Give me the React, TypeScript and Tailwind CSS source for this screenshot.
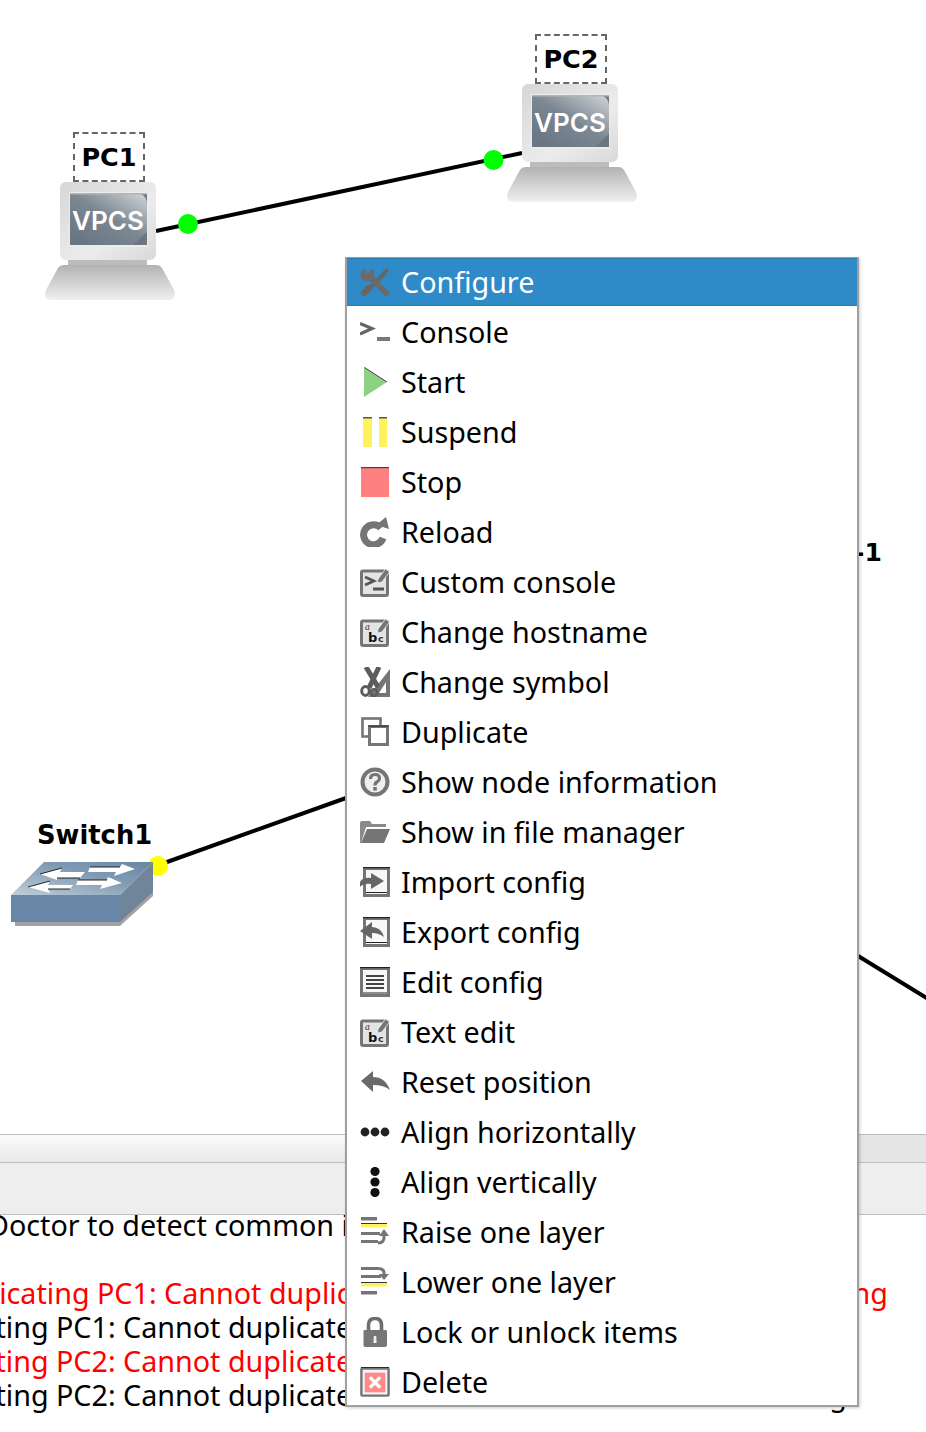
import React from 'react'

const G = '#757575'

// Small box shared by the "custom console" and "hostname" icons
const PencilBox = ({ children }: { children: React.ReactNode }) => (
  <svg width="30" height="30" viewBox="0 0 30 30">
    <rect x="1.5" y="4" width="26" height="24.5" rx="1.5" fill="#e4e4e4" stroke={G} strokeWidth="3" />
    {children}
    <path d="M18 12 L25.5 2 L29.5 5 L22 15 L17.5 16 Z" fill={G} stroke="#f2f2f2" strokeWidth="0.8" />
  </svg>
)

const HostnameIcon = () => (
  <PencilBox>
    <text x="5" y="13" fontSize="9.5" fontStyle="italic" fontFamily="Liberation Serif, serif" fill="#333">a</text>
    <text x="8" y="25" fontSize="13" fontWeight="700" fontFamily="DejaVu Sans, sans-serif" fill="#111">b</text>
    <text x="18" y="25" fontSize="9.5" fontWeight="700" fontFamily="DejaVu Sans, sans-serif" fill="#333">c</text>
  </PencilBox>
)

const icons: Record<string, React.ReactNode> = {
  configure: (
    <svg width="30" height="30" viewBox="0 0 30 30">
      <path d="M24 7 L9 22" stroke="#666" strokeWidth="4.5" />
      <path d="M9 21 L4 26" stroke="#666" strokeWidth="6.5" strokeLinecap="round" />
      <path d="M22 9 L23 4 L27 1 L29 3 L26 7 Z" fill="#666" />
      <path d="M9 9 L26 26" stroke="#6a6a6a" strokeWidth="6" strokeLinecap="round" />
      <circle cx="7.5" cy="7.5" r="7" fill="#6a6a6a" />
      <polygon points="7,7 3,-1 12,-1 11,3" fill="#2e8bc8" />
    </svg>
  ),
  console: (
    <svg width="30" height="30" viewBox="0 0 30 30">
      <path d="M0 6.5 L12 11.5 L0 17" fill="none" stroke="#666" strokeWidth="3.2" />
      <rect x="17" y="20" width="13" height="4" fill="#777" />
    </svg>
  ),
  start: (
    <svg width="30" height="30" viewBox="0 0 30 30">
      <polygon points="4,0 27,15 4,30" fill="#8dd283" />
      <path d="M4.5 0.5 L27 15" stroke="#444" strokeWidth="1" fill="none" />
    </svg>
  ),
  suspend: (
    <svg width="30" height="30" viewBox="0 0 30 30">
      <rect x="3" y="0" width="9" height="30" fill="#fff25a" />
      <rect x="19" y="0" width="8" height="30" fill="#fff25a" />
      <rect x="3" y="0" width="9" height="1.5" fill="#555" />
      <rect x="19" y="0" width="8" height="1.5" fill="#555" />
    </svg>
  ),
  stop: (
    <svg width="30" height="30" viewBox="0 0 30 30">
      <rect x="1" y="0" width="28" height="30" fill="#ff8080" />
      <rect x="1" y="0" width="28" height="1.2" fill="#444" />
    </svg>
  ),
  reload: (
    <svg width="30" height="30" viewBox="0 0 30 30">
      <path d="M21 11 A 10 10 0 1 0 23 21" fill="none" stroke={G} strokeWidth="7" />
      <polygon points="16,8 29,12 26,0" fill={G} />
    </svg>
  ),
  custom: (
    <PencilBox>
      <path d="M5 10 L14 14 L5 18" fill="none" stroke="#555" strokeWidth="2.6" />
      <rect x="13" y="20.5" width="11" height="3" fill="#555" />
    </PencilBox>
  ),
  hostname: <HostnameIcon />,
  symbol: (
    <svg width="30" height="30" viewBox="0 0 30 30">
      <path d="M30 2 V30 H8 Z M26 15 L19 26 H26 Z" fill={G} fillRule="evenodd" />
      <path d="M6 0 L18 20" stroke="#5c5c5c" strokeWidth="5" />
      <path d="M19 0 L9 21" stroke="#5c5c5c" strokeWidth="5" />
      <ellipse cx="5.5" cy="24" rx="3.8" ry="4.4" fill="none" stroke="#5c5c5c" strokeWidth="3" />
      <circle cx="14" cy="25.5" r="3.2" fill="none" stroke="#5c5c5c" strokeWidth="2.6" />
    </svg>
  ),
  duplicate: (
    <svg width="30" height="30" viewBox="0 0 30 30">
      <rect x="2.5" y="1.5" width="18" height="18" fill="#fff" stroke={G} strokeWidth="2.6" />
      <rect x="9.5" y="9.5" width="18" height="18" fill="#fff" stroke={G} strokeWidth="3" />
      <rect x="8.5" y="8.5" width="20" height="1.2" fill="#333" />
    </svg>
  ),
  info: (
    <svg width="30" height="30" viewBox="0 0 30 30">
      <circle cx="15" cy="15" r="12.5" fill="#efefef" stroke={G} strokeWidth="4" />
      <path d="M10.5 12 Q10.5 7.5 15 7.5 Q19.5 7.5 19.5 11.5 Q19.5 13.5 17 15 Q15 16 15 18.5" fill="none" stroke={G} strokeWidth="3.2" />
      <rect x="13.2" y="20" width="3.6" height="3.6" fill={G} />
    </svg>
  ),
  folder: (
    <svg width="30" height="30" viewBox="0 0 30 30">
      <path d="M0 26 V6 Q0 4 2 4 H10 L12 7 H26 V10 H6 L1 26 Z" fill="#8a8a8a" />
      <path d="M7 12 H30 L24 26 H1 Z" fill="#757575" />
    </svg>
  ),
  importCfg: (
    <svg width="30" height="30" viewBox="0 0 30 30">
      <rect x="4.5" y="1.5" width="24" height="27" fill="#f8f8f8" stroke={G} strokeWidth="3" />
      <rect x="3" y="0" width="27" height="1.2" fill="#222" />
      <rect x="6" y="25" width="21" height="1" fill="#222" />
      <path d="M0 15 Q3 10 11 11 V6 L24 14 L11 22 V17 Q4 16 0 20 Z" fill="#666" />
    </svg>
  ),
  exportCfg: (
    <svg width="30" height="30" viewBox="0 0 30 30">
      <rect x="4.5" y="1.5" width="24" height="27" fill="#f8f8f8" stroke={G} strokeWidth="3" />
      <rect x="3" y="0" width="27" height="1.2" fill="#222" />
      <rect x="6" y="25" width="21" height="1" fill="#222" />
      <path d="M0 14 L12 5 V10 Q21 10 24 20 Q19 16 12 16 V22 Z" fill="#666" />
    </svg>
  ),
  edit: (
    <svg width="30" height="30" viewBox="0 0 30 30">
      <rect x="1.5" y="1.5" width="27" height="27" fill="#f8f8f8" stroke={G} strokeWidth="3" />
      <rect x="0" y="0" width="30" height="1.2" fill="#222" />
      <rect x="3" y="25.5" width="24" height="1" fill="#222" />
      <path d="M6 9 H24 M6 13 H24 M6 17 H24 M6 21 H24" stroke="#444" strokeWidth="1.8" />
    </svg>
  ),
  reset: (
    <svg width="30" height="30" viewBox="0 0 30 30">
      <path d="M1 14 L13 4 V10 Q25 10 30 23 Q24 18 13 18 V25 Z" fill="#6a6a6a" />
    </svg>
  ),
  alignH: (
    <svg width="30" height="30" viewBox="0 0 30 30">
      <circle cx="5" cy="15" r="4.4" fill="#222" />
      <circle cx="15" cy="15" r="4.4" fill="#222" />
      <circle cx="25" cy="15" r="4.4" fill="#222" />
    </svg>
  ),
  alignV: (
    <svg width="30" height="30" viewBox="0 0 30 30">
      <circle cx="15" cy="4.5" r="4.6" fill="#111" />
      <circle cx="15" cy="15" r="4.6" fill="#111" />
      <circle cx="15" cy="25.5" r="4.6" fill="#111" />
    </svg>
  ),
  raise: (
    <svg width="30" height="30" viewBox="0 0 30 30">
      <rect x="1" y="0" width="16" height="3.5" fill={G} />
      <rect x="1" y="7" width="26" height="3.5" fill="#fff25a" />
      <rect x="1" y="6" width="26" height="1" fill="#333" />
      <rect x="1" y="15" width="19" height="3" fill={G} />
      <rect x="1" y="23" width="17" height="3" fill={G} />
      <path d="M18 26 Q25 26 24 18" fill="none" stroke={G} strokeWidth="3" />
      <polygon points="19,19 24,12 29,19" fill={G} />
    </svg>
  ),
  lower: (
    <svg width="30" height="30" viewBox="0 0 30 30">
      <rect x="1" y="0" width="17" height="3" fill={G} />
      <rect x="1" y="8" width="20" height="3" fill={G} />
      <rect x="1" y="16" width="26" height="3.5" fill="#fff25a" />
      <rect x="1" y="15" width="26" height="1" fill="#333" />
      <rect x="1" y="24" width="16" height="3.5" fill={G} />
      <path d="M18 1.5 Q25 1.5 24 8" fill="none" stroke={G} strokeWidth="3" />
      <polygon points="19,7 29,7 24,13" fill={G} />
    </svg>
  ),
  lock: (
    <svg width="30" height="30" viewBox="0 0 30 30">
      <path d="M8.5 14 V8 Q8.5 1.5 15 1.5 Q21.5 1.5 21.5 8 V14" fill="none" stroke="#6e6e6e" strokeWidth="3.6" />
      <path d="M3.5 14 Q3.5 13 5 13 H25 Q27 13 27 14 V28 Q27 30 25 30 H5 Q3.5 30 3.5 28 Z" fill="#777" />
      <path d="M13.8 19 H16.2 L16.6 26 H13.4 Z" fill="#eee" />
    </svg>
  ),
  del: (
    <svg width="32" height="32" viewBox="0 0 32 32">
      <rect x="1.5" y="1.5" width="29" height="29" rx="1" fill="#f5f5f5" stroke={G} strokeWidth="2.6" />
      <rect x="1" y="0" width="30" height="1" fill="#222" />
      <rect x="5" y="6" width="22" height="21" fill="#ff8a8a" />
      <path d="M10.5 11 L21.5 22 M21.5 11 L10.5 22" stroke="#fff" strokeWidth="3.6" />
    </svg>
  ),
}

const menuItems: { label: string; icon: string }[] = [
  { label: 'Configure', icon: 'configure' },
  { label: 'Console', icon: 'console' },
  { label: 'Start', icon: 'start' },
  { label: 'Suspend', icon: 'suspend' },
  { label: 'Stop', icon: 'stop' },
  { label: 'Reload', icon: 'reload' },
  { label: 'Custom console', icon: 'custom' },
  { label: 'Change hostname', icon: 'hostname' },
  { label: 'Change symbol', icon: 'symbol' },
  { label: 'Duplicate', icon: 'duplicate' },
  { label: 'Show node information', icon: 'info' },
  { label: 'Show in file manager', icon: 'folder' },
  { label: 'Import config', icon: 'importCfg' },
  { label: 'Export config', icon: 'exportCfg' },
  { label: 'Edit config', icon: 'edit' },
  { label: 'Text edit', icon: 'hostname' },
  { label: 'Reset position', icon: 'reset' },
  { label: 'Align horizontally', icon: 'alignH' },
  { label: 'Align vertically', icon: 'alignV' },
  { label: 'Raise one layer', icon: 'raise' },
  { label: 'Lower one layer', icon: 'lower' },
  { label: 'Lock or unlock items', icon: 'lock' },
  { label: 'Delete', icon: 'del' },
]

const VpcsIcon = ({ id }: { id: string }) => (
  <svg width="130" height="118" viewBox="0 0 130 118">
    <defs>
      <linearGradient id={`${id}-case`} x1="0" y1="0" x2="1" y2="1">
        <stop offset="0" stopColor="#d6d6d6" />
        <stop offset="0.6" stopColor="#ececec" />
        <stop offset="1" stopColor="#d9d9d9" />
      </linearGradient>
      <linearGradient id={`${id}-screen`} x1="0.1" y1="0.9" x2="0.9" y2="0">
        <stop offset="0" stopColor="#6a7682" />
        <stop offset="0.5" stopColor="#7b8792" />
        <stop offset="1" stopColor="#c9ced2" />
      </linearGradient>
      <linearGradient id={`${id}-base`} x1="0" y1="0" x2="0" y2="1">
        <stop offset="0" stopColor="#b2b2b2" />
        <stop offset="1" stopColor="#f0f0f0" />
      </linearGradient>
    </defs>
    <rect x="23" y="76" width="79" height="9" fill="#bcbcbc" />
    <path d="M19 83 H112 Q115 83 117 86 L129 108 Q132 118 124 118 H6 Q-2 118 1 108 L13 86 Q15 83 19 83 Z" fill={`url(#${id}-base)`} />
    <rect x="15" y="0" width="96" height="78" rx="6" fill={`url(#${id}-case)`} />
    <rect x="24" y="10" width="79" height="55" fill="#ececec" />
    <rect x="25" y="11" width="77" height="52" fill="#6b7681" />
    <path d="M25 11 H90 Q102 11 102 23 V50 L88 63 H40 Q25 63 25 50 Z" fill={`url(#${id}-screen)`} />
    <rect x="25" y="11" width="77" height="1.5" fill="#b5b5b5" />
    <text x="63" y="48" textAnchor="middle" fontSize="26" fontFamily="Inter, sans-serif" fontWeight="600" fill="#fff">VPCS</text>
  </svg>
)

const NodeLabel = ({ children, className }: { children: React.ReactNode; className: string }) => (
  <div className={`absolute w-[72px] h-[50px] border-2 border-dashed border-[#666] flex items-center justify-center font-['DejaVu_Sans',sans-serif] font-bold text-[25.5px] text-black ${className}`}>
    {children}
  </div>
)

export default function App() {
  return (
    <div className="flex flex-col w-[926px] h-[1432px] bg-white overflow-hidden relative font-['Noto_Sans',sans-serif]">
      {/* Scene */}
      <div className="relative h-[1134px] shrink-0 bg-white">
        <svg className="absolute inset-0" width="926" height="1134">
          <line x1="156" y1="231" x2="522" y2="153" stroke="#000" strokeWidth="4" />
          <line x1="160" y1="864.5" x2="360" y2="793" stroke="#000" strokeWidth="4" />
          <line x1="850" y1="951" x2="930" y2="1000" stroke="#000" strokeWidth="4" />
          <circle cx="188" cy="224" r="10" fill="#00ff00" />
          <circle cx="493.5" cy="160" r="10" fill="#00ff00" />
        </svg>

        <NodeLabel className="left-[73px] top-[132px]">PC1</NodeLabel>
        <div className="absolute left-[45px] top-[182px]"><VpcsIcon id="pc1" /></div>

        <NodeLabel className="left-[535px] top-[34px]">PC2</NodeLabel>
        <div className="absolute left-[507px] top-[84px]"><VpcsIcon id="pc2" /></div>

        <div className="absolute left-[37px] top-[817px] font-['DejaVu_Sans',sans-serif] font-bold text-[25.8px] leading-[36px] text-black">Switch1</div>
        <div className="absolute left-[148px] top-[856px] w-[20px] h-[20px] rounded-full bg-[#ffff00]" />
        <div className="absolute left-[10px] top-[860px]">
          <svg width="160" height="70" viewBox="0 0 160 70">
            <defs>
              <linearGradient id="sw-top" x1="0" y1="1" x2="1" y2="0">
                <stop offset="0" stopColor="#c0ced9" />
                <stop offset="0.6" stopColor="#7f9ab3" />
                <stop offset="1" stopColor="#6887a6" />
              </linearGradient>
            </defs>
            <polygon points="5,62 5,66 110,66 143,36 143,30 110,60" fill="#a3a3a3" />
            <polygon points="1,35 34,2 143,2 110,35" fill="url(#sw-top)" />
            <rect x="1" y="35" width="109" height="27" fill="#6887a6" />
            <polygon points="110,35 143,2 143,32 110,62" fill="#708599" />
            <polygon points="30,14 52,8 50,12 75,12 70,18 47,18 47,20" fill="#fff" />
            <polygon points="18,27 40,21 38,25 63,25 60,29 38,29 40,33" fill="#fff" />
            <polygon points="80,7 110,7 112,4 125,9 104,16 106,12 78,12" fill="#fff" />
            <polygon points="68,20 97,20 98,17 112,23 90,29 92,25 66,25" fill="#fff" />
            <path d="M30 14 L52 8 M47 18 H70 M18 27 L40 21 M38 29 H60 M80 7 H110 M68 20 H97" stroke="#111" strokeWidth="0.9" fill="none" />
          </svg>
        </div>

        <div className="absolute left-[854px] top-[535px] font-['DejaVu_Sans',sans-serif] font-bold text-[25px] leading-[36px] text-black">-1</div>
      </div>

      {/* Dock title */}
      <div className="flex h-[29px] shrink-0 border-y border-[#bdbdbd]">
        <div className="w-[600px] bg-gradient-to-b from-[#fcfcfc] to-[#e8e8e8]" />
        <div className="flex-1 bg-[#e5e5e5]" />
      </div>

      {/* Toolbar strip */}
      <div className="h-[52px] shrink-0 bg-[#eeeeee] border-b border-[#bdbdbd]" />

      {/* Console log */}
      <div className="flex-1 overflow-hidden whitespace-nowrap text-[28.7px] leading-[34px] text-black">
        <div className="ml-[-12px] mt-[-7px]">Doctor to detect common issues</div>
        <div className="h-[34px]" />
        <div className="ml-[-137px] text-[#ff0000]">Error duplicating PC1: Cannot duplicate node data while the node is running</div>
        <div className="ml-[-178px]">Error duplicating PC1: Cannot duplicate node data while the node is running</div>
        <div className="ml-[-178px] text-[#ff0000]">Error duplicating PC2: Cannot duplicate node data while the node is running</div>
        <div className="ml-[-178px]">Error duplicating PC2: Cannot duplicate node data while the node is running</div>
      </div>

      {/* Context menu */}
      <div className="absolute left-[345px] top-[257px] w-[514px] h-[1150px] overflow-hidden bg-white border-x-2 border-b-2 border-t border-[#a0a0a0] shadow-[1px_1px_3px_rgba(0,0,0,0.2)]">
        {menuItems.map((item, i) => (
          <div key={item.label} className="h-[50px]">
            <div className={i === 0
              ? 'flex items-center h-[48px] pl-[13px] bg-[#2e8bc8] border-y border-[#2a79ad] text-white'
              : 'flex items-center h-[48px] pl-[13px] text-black'}>
              <span className="flex items-center justify-center w-[30px] h-[30px] shrink-0">{icons[item.icon]}</span>
              <span className="ml-[11px] text-[28.7px] leading-[34px] whitespace-nowrap">{item.label}</span>
            </div>
          </div>
        ))}
      </div>
    </div>
  )
}
